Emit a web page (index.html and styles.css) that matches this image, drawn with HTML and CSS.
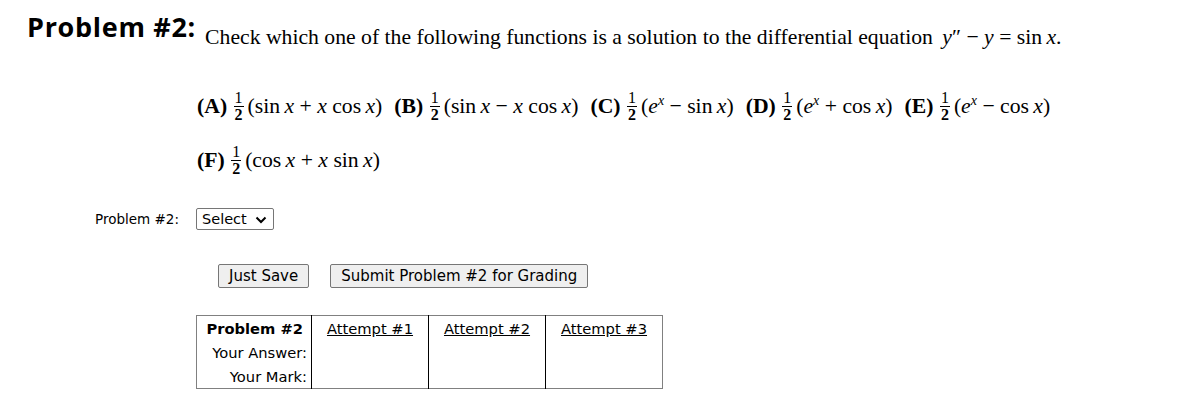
FILE: index.html
```html
<!DOCTYPE html>
<html lang="en">
<head>
    <meta charset="UTF-8">
    <title>Problem #2</title>
    <link rel="stylesheet" href="styles.css">
</head>
<body>
    <div class="problem-head">
        <span class="title">Problem #2:</span>
        <span class="question">Check which one of the following functions is a solution to the differential equation <span class="eq"><i>y</i>&Prime; &minus; <i>y</i> = sin&thinsp;<i>x</i>.</span></span>
    </div>

    <div class="choices">
        <div class="choice-row">
            <span class="choice"><b>(A)</b> <span class="frac"><span>1</span><span>2</span></span>(sin&thinsp;<i>x</i> + <i>x</i> cos&thinsp;<i>x</i>)</span>
            <span class="choice"><b>(B)</b> <span class="frac"><span>1</span><span>2</span></span>(sin&thinsp;<i>x</i> &minus; <i>x</i> cos&thinsp;<i>x</i>)</span>
            <span class="choice"><b>(C)</b> <span class="frac"><span>1</span><span>2</span></span>(<i>e</i><sup><i>x</i></sup> &minus; sin&thinsp;<i>x</i>)</span>
            <span class="choice"><b>(D)</b> <span class="frac"><span>1</span><span>2</span></span>(<i>e</i><sup><i>x</i></sup> + cos&thinsp;<i>x</i>)</span>
            <span class="choice"><b>(E)</b> <span class="frac"><span>1</span><span>2</span></span>(<i>e</i><sup><i>x</i></sup> &minus; cos&thinsp;<i>x</i>)</span>
        </div>
        <div class="choice-row">
            <span class="choice"><b>(F)</b> <span class="frac"><span>1</span><span>2</span></span>(cos&thinsp;<i>x</i> + <i>x</i> sin&thinsp;<i>x</i>)</span>
        </div>
    </div>

    <div class="answer-row">
        <label class="answer-label" for="ans2">Problem #2:</label>
        <div class="select-wrap">
            <select id="ans2" class="answer-select">
                <option>Select</option>
                <option>A</option>
                <option>B</option>
                <option>C</option>
                <option>D</option>
                <option>E</option>
                <option>F</option>
            </select>
            <svg class="chevron" width="12" height="8" viewBox="0 0 12 8"><path d="M1.5 1.5 L6 6 L10.5 1.5" fill="none" stroke="#000" stroke-width="2"/></svg>
        </div>
    </div>

    <div class="buttons">
        <button class="btn">Just Save</button>
        <button class="btn">Submit Problem #2 for Grading</button>
    </div>

    <table class="attempts">
        <colgroup>
            <col class="col-head">
            <col class="col-try">
            <col class="col-try">
            <col class="col-try">
        </colgroup>
        <tr>
            <th class="row-head">Problem #2</th>
            <td><a href="#">Attempt #1</a></td>
            <td><a href="#">Attempt #2</a></td>
            <td><a href="#">Attempt #3</a></td>
        </tr>
        <tr>
            <td class="row-head">Your Answer:</td>
            <td></td><td></td><td></td>
        </tr>
        <tr>
            <td class="row-head">Your Mark:</td>
            <td></td><td></td><td></td>
        </tr>
    </table>
</body>
</html>
```

FILE: styles.css
```css
body {
    margin: 0;
    background: #fff;
    color: #000;
    font-family: "DejaVu Sans", Verdana, sans-serif;
}

.problem-head {
    height: 58px;
    padding: 8px 0 0 27px;
    white-space: nowrap;
    box-sizing: border-box;
}

.title {
    font-family: "Open Sans", "DejaVu Sans", sans-serif;
    font-weight: 700;
    font-size: 27px;
    letter-spacing: 0.7px;
}

.question {
    font-family: "Liberation Serif", "Times New Roman", serif;
    font-size: 21.7px;
    margin-left: 4px;
    position: relative;
    top: 7px;
}

.eq {
    margin-left: 4px;
}

.choices {
    font-family: "Liberation Serif", "Times New Roman", serif;
    font-size: 21.7px;
    padding-left: 197px;
    padding-top: 33px;
}

.choice-row {
    display: flex;
    gap: 12px;
    height: 54px;
    white-space: nowrap;
}

.frac {
    display: inline-flex;
    flex-direction: column;
    align-items: center;
    font-size: 16px;
    line-height: 14px;
    vertical-align: 10px;
    margin: 0 4px 0 1px;
}

.frac span:first-child {
    border-bottom: 1px solid #000;
    padding: 0 1px 1px;
}

.frac span:last-child {
    font-weight: 700;
    padding-top: 1px;
}

sup {
    font-size: 14px;
    vertical-align: 8px;
    line-height: 0;
}

.answer-row {
    display: flex;
    align-items: center;
    padding-left: 95px;
    padding-top: 9px;
}

.answer-label {
    font-size: 13.5px;
    width: 101px;
}

.select-wrap {
    position: relative;
}

.answer-select {
    appearance: none;
    -webkit-appearance: none;
    font-family: "DejaVu Sans", sans-serif;
    font-size: 14.5px;
    width: 78px;
    height: 22px;
    padding: 0 0 0 5px;
    border: 1px solid #767676;
    border-radius: 2px;
    background: #fff;
    color: #000;
}

.chevron {
    position: absolute;
    right: 7px;
    top: 8px;
    pointer-events: none;
}

.buttons {
    display: flex;
    gap: 21px;
    padding-left: 218px;
    margin-top: 34px;
}

.btn {
    font-family: "DejaVu Sans", sans-serif;
    font-size: 15px;
    height: 24px;
    padding: 0 10px;
    background: #efefef;
    border: 1px solid #767676;
    border-radius: 2px;
    color: #000;
}

.attempts {
    margin: 27px 0 0 196px;
    border-collapse: collapse;
    border: 1px solid #808080;
    font-size: 14.7px;
    table-layout: fixed;
    width: 467px;
}

.col-head {
    width: 115px;
}

.col-try {
    width: 117px;
}

.attempts th,
.attempts td {
    height: 24px;
    padding: 0;
    text-align: center;
    border-left: 1px solid #000;
    white-space: nowrap;
}

.attempts .row-head {
    text-align: right;
    border-left: none;
    padding-right: 4px;
}

.attempts th.row-head {
    font-weight: 700;
    padding-right: 8px;
}

.attempts a {
    color: #000;
}
```
